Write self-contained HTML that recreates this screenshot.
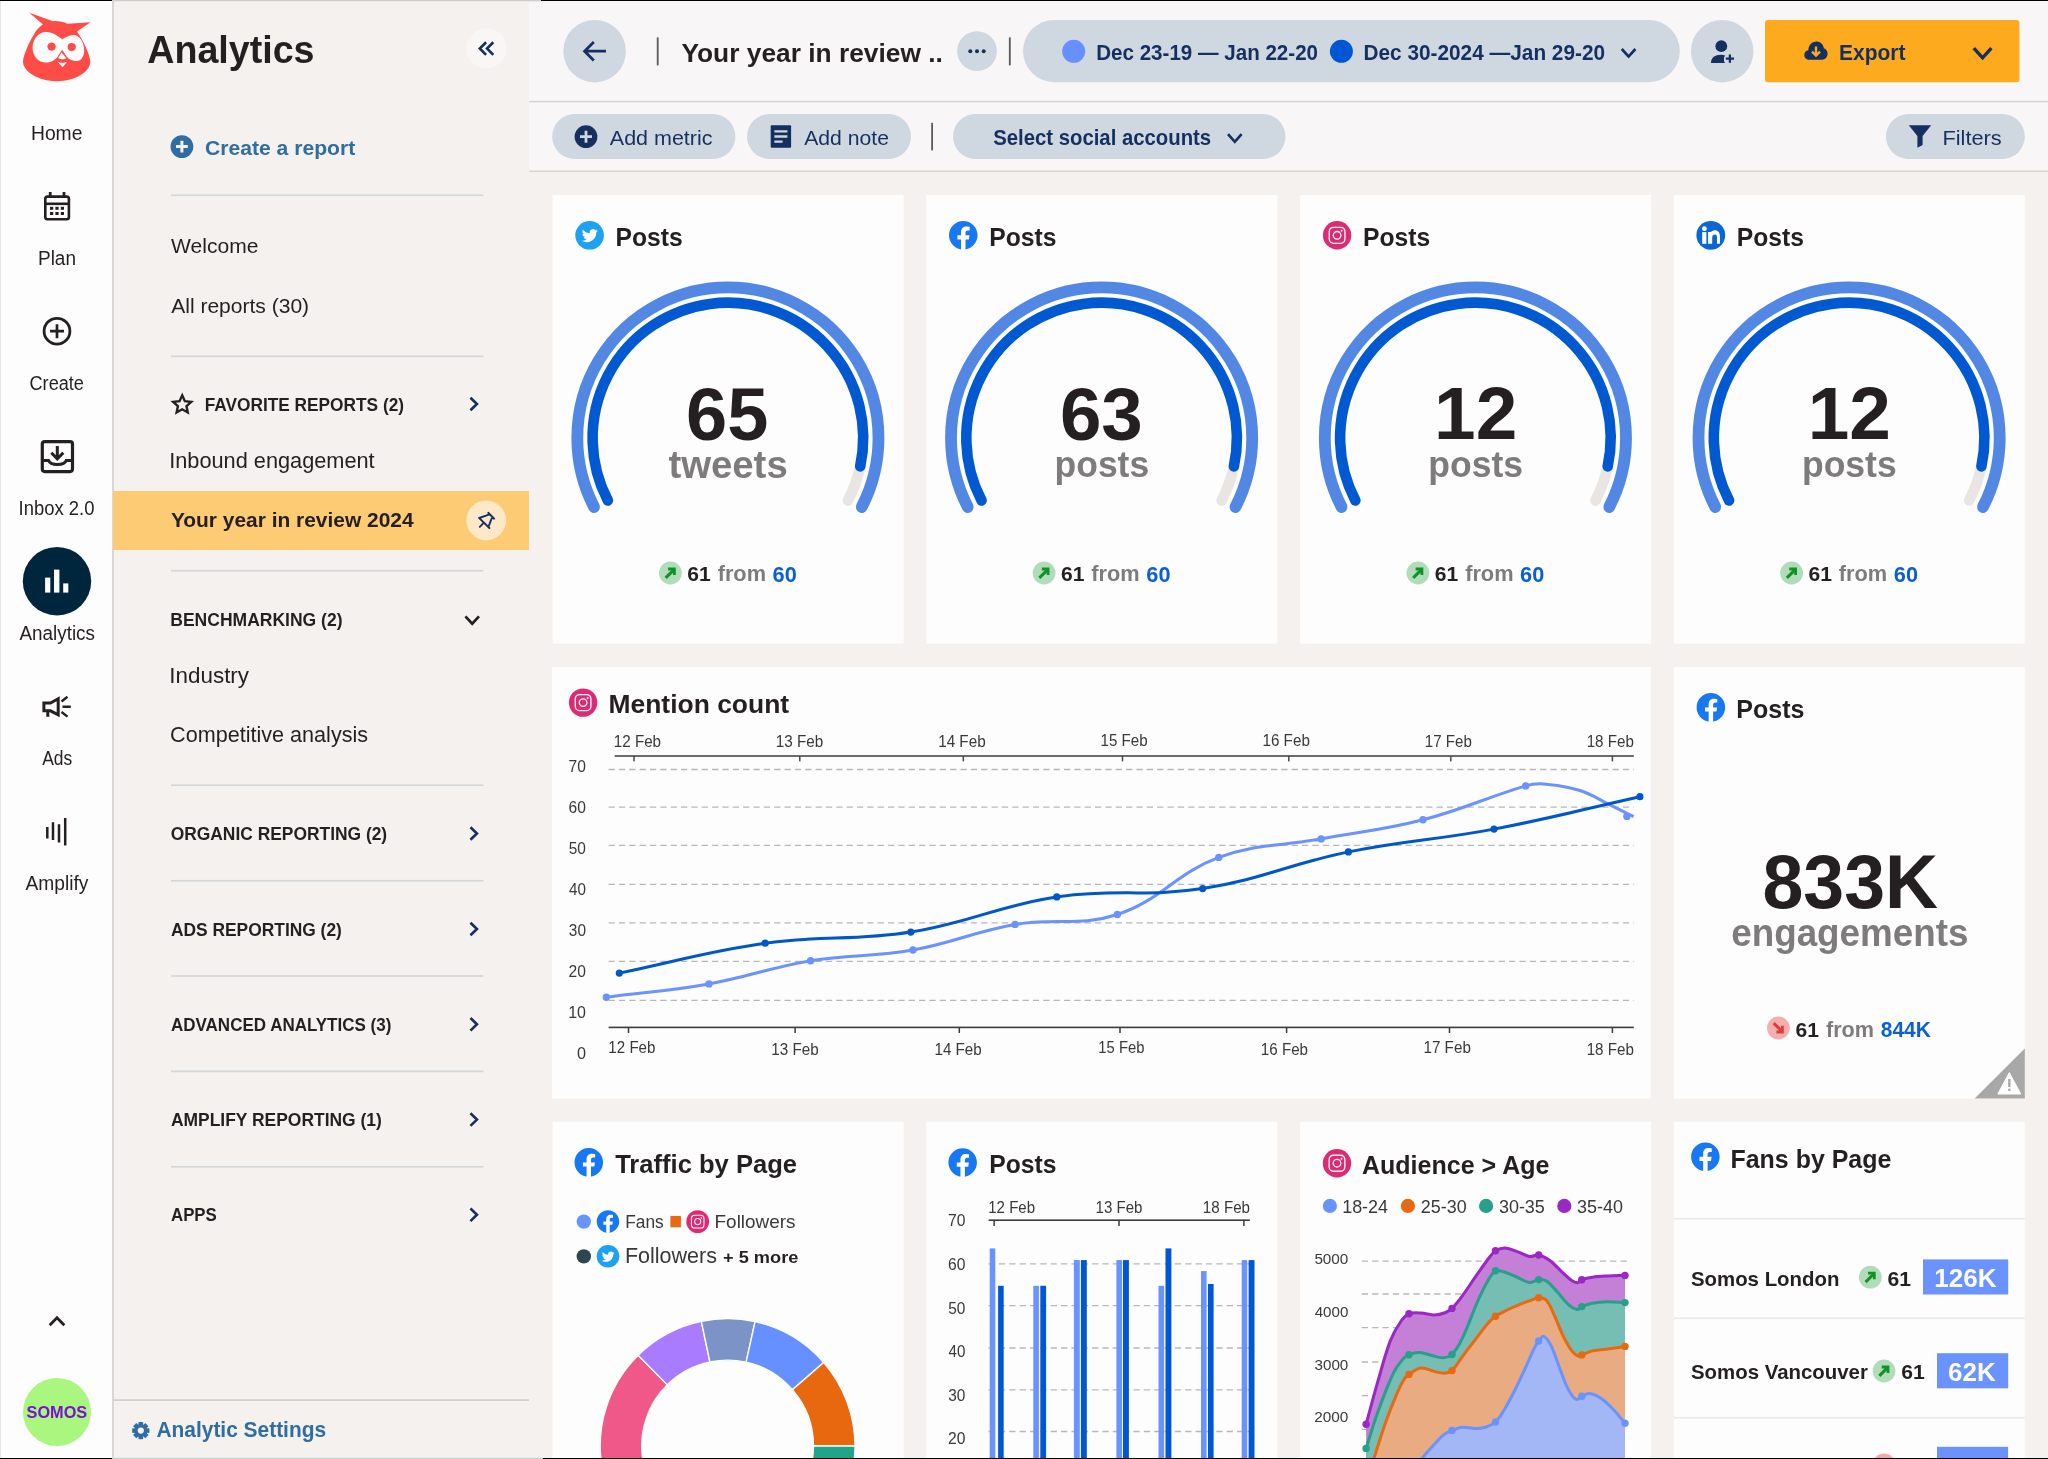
<!DOCTYPE html><html lang="en"><head><meta charset="utf-8"><title>Analytics</title><style>
*{margin:0;padding:0;box-sizing:border-box}
html,body{width:2048px;height:1459px;overflow:hidden;background:#f5f1ee}
body{font-family:"Liberation Sans",sans-serif;position:relative}
.abs{position:absolute;display:block}
svg{overflow:hidden;will-change:transform}
svg text{font-family:"Liberation Sans",sans-serif;white-space:pre}
.card{background:#fdfdfd}
</style></head><body>
<div class="abs nav" style="left:0px;top:0px;width:113px;height:1459px;background:#fdfdfd"></div>
<div class="abs side" style="left:113px;top:0px;width:416px;height:1459px;background:#f5f1ee"></div>
<div class="abs head" style="left:529px;top:0px;width:1519px;height:171px;background:#f8f6f6"></div>
<div class="abs " style="left:0px;top:0px;width:1.4px;height:1459px;background:#e6e4e4"></div>
<div class="abs " style="left:112.2px;top:0px;width:2px;height:1459px;background:#d9d7d7"></div>
<svg class="abs " style="left:0px;top:0px" width="113" height="1459" viewBox="0 0 113 1459"><path fill="#ff4c46" d="M29.3 12.8 L53 21.2 C57 20.6 62.5 21.3 67.5 23.8 L90.6 22.2 L77 31.4 C83 40 89.8 54 90.3 61.5 C90.3 72 75 81.2 57 81.2 C38.5 81.2 23 71.5 23 61.5 C23.3 55 29.5 41 36 31 C38.2 28.2 40.5 26 43 24.6 Z"/><path fill="#fdfdfd" d="M62.3 39.2 C58 36.5 53 32 46.5 32 C38 32 32.6 39.5 32.6 48 C32.6 56.5 38.5 62.6 46 62.6 C51 62.6 55.5 59.5 58 56.5 L62.2 50 L66.5 56.5 C69 59.5 73 61 76.5 61 C81.5 61 84.2 56 84.2 50.5 C84.2 42.5 79.5 35 73.5 35 C69 35 65.5 37.5 62.3 39.2 Z"/><circle cx="51.6" cy="46.6" r="4.2" fill="#ff4c46"/><circle cx="71.7" cy="47" r="4.1" fill="#ff4c46"/><path fill="#ff4c46" d="M62 50 L56.5 58.8 C58.5 60.3 60.3 60.8 62.3 60.8 C64.3 60.8 66 60.3 67.8 59 Z"/><path fill="#fdfdfd" d="M61.6 52.5 L58.2 58.3 C59.6 59 60.8 59.3 62.3 59.3 C63.7 59.3 64.8 59 66.3 58.3 Z"/><path fill="#fdfdfd" d="M57.4 61.6 C59 62.6 60.6 63 62.4 63 C64.2 63 65.8 62.6 67.4 61.6 L62.5 67.3 Z"/><text x="30.96" y="140" font-size="19.33" font-weight="400" fill="#241f21" textLength="51.46" lengthAdjust="spacingAndGlyphs">Home</text><text x="37.98" y="264.8" font-size="19.33" font-weight="400" fill="#241f21" textLength="37.99" lengthAdjust="spacingAndGlyphs">Plan</text><text x="29.49" y="390" font-size="19.33" font-weight="400" fill="#241f21" textLength="54.46" lengthAdjust="spacingAndGlyphs">Create</text><text x="18.54" y="515.2" font-size="19.33" font-weight="400" fill="#241f21" textLength="75.89" lengthAdjust="spacingAndGlyphs">Inbox 2.0</text><text x="19.5" y="640" font-size="19.33" font-weight="400" fill="#241f21" textLength="75.49" lengthAdjust="spacingAndGlyphs">Analytics</text><text x="42.2" y="765.2" font-size="19.33" font-weight="400" fill="#241f21" textLength="29.98" lengthAdjust="spacingAndGlyphs">Ads</text><text x="25.5" y="890" font-size="19.33" font-weight="400" fill="#241f21" textLength="62.97" lengthAdjust="spacingAndGlyphs">Amplify</text><g fill="none" stroke="#241f21" stroke-width="2.6"><rect x="45.3" y="196.6" width="23.6" height="22.6" rx="2.2"/><path d="M45.3 203.8 H68.9"/><path d="M50.2 192 V197 M64 192 V197" stroke-width="2.8"/></g><rect x="50" y="206.8" width="3.2" height="3" fill="#241f21"/><rect x="55.4" y="206.8" width="3.2" height="3" fill="#241f21"/><rect x="60.8" y="206.8" width="3.2" height="3" fill="#241f21"/><rect x="50" y="212" width="3.2" height="3" fill="#241f21"/><rect x="55.4" y="212" width="3.2" height="3" fill="#241f21"/><rect x="60.8" y="212" width="3.2" height="3" fill="#241f21"/><circle cx="57" cy="331.2" r="12.9" fill="none" stroke="#241f21" stroke-width="2.8"/><path d="M50 331.2 H64 M57 324.2 V338.2" stroke="#241f21" stroke-width="2.7" fill="none"/><rect x="42.3" y="441.6" width="30.2" height="30" rx="2.5" fill="none" stroke="#241f21" stroke-width="3.2"/><path d="M42.3 460.5 H48.5 C50.5 465.8 64.3 465.8 66.3 460.5 H72.5" fill="none" stroke="#241f21" stroke-width="3"/><path d="M57.3 446 V458.5 M51.3 452.8 L57.3 458.8 L63.3 452.8" fill="none" stroke="#241f21" stroke-width="3"/><circle cx="57" cy="581.2" r="34.2" fill="#00263e"/><rect x="45.1" y="577.6" width="5.2" height="15" fill="#fdfdfd"/><rect x="54" y="569.6" width="5.4" height="23" fill="#fdfdfd"/><rect x="63.2" y="583.4" width="5.1" height="9.2" fill="#fdfdfd"/><g fill="none" stroke="#241f21" stroke-width="3" stroke-linejoin="miter"><path d="M43.9 703 H50.5 L58.2 698.8 V714.8 L50.5 710.8 H43.9 Z"/><path d="M47.8 711 V716.8" stroke-width="3"/><path d="M62.5 706.8 H70.8 M61.5 701.5 L67.5 696.8 M61.5 712 L67.5 716.6" stroke-width="2.4"/></g><path d="M47.3 827 V838.6 M53 822.2 V840 M59 824.3 V842.5 M65.2 818 V845.6" stroke="#241f21" stroke-width="2.5" fill="none"/><path d="M49.7 1325.3 L57 1317.7 L64.3 1325.3" fill="none" stroke="#241f21" stroke-width="2.8" stroke-linecap="butt" stroke-linejoin="miter"/><circle cx="57" cy="1412" r="34" fill="#a9f77f"/><text x="26.51" y="1417.8" font-size="16.86" font-weight="700" fill="#7a0fd6" textLength="60.7" lengthAdjust="spacingAndGlyphs">SOMOS</text></svg>
<svg class="abs " style="left:113px;top:0px" width="416" height="1459" viewBox="113 0 416 1459"><text x="147.26" y="62.5" font-size="38.66" font-weight="700" fill="#241f21" textLength="167.3" lengthAdjust="spacingAndGlyphs">Analytics</text><circle cx="486.3" cy="48.3" r="20" fill="#f9f7f6"/><path d="M486.1 42.3 L479.8 48.5 L486.1 54.9 M493.3 42.3 L487 48.5 L493.3 54.9" fill="none" stroke="#15305f" stroke-width="2.6"/><circle cx="181.9" cy="146.6" r="11.4" fill="#2f6da3"/><path d="M176 146.6 H187.8 M181.9 140.7 V152.5" stroke="#f5f1ee" stroke-width="3" fill="none"/><text x="204.95" y="154.9" font-size="20.93" font-weight="700" fill="#2f6da3" textLength="150.34" lengthAdjust="spacingAndGlyphs">Create a report</text><rect x="171" y="194.45" width="312.4" height="1.7" fill="#d4d7da"/><text x="171.09" y="253.4" font-size="20.93" font-weight="400" fill="#241f21" textLength="87.34" lengthAdjust="spacingAndGlyphs">Welcome</text><text x="171.2" y="312.5" font-size="21.08" font-weight="400" fill="#241f21" textLength="137.92" lengthAdjust="spacingAndGlyphs">All reports (30)</text><rect x="171" y="355.45" width="312.4" height="1.7" fill="#d4d7da"/><polygon points="182.2,395.3 184.85,401.16 191.24,401.86 186.48,406.19 187.78,412.49 182.2,409.3 176.62,412.49 177.92,406.19 173.16,401.86 179.55,401.16" fill="none" stroke="#241f21" stroke-width="2.4" stroke-linejoin="miter"/><text x="204.68" y="411" font-size="18.75" font-weight="700" fill="#241f21" textLength="199.36" lengthAdjust="spacingAndGlyphs">FAVORITE REPORTS (2)</text><path d="M470.45 397.7 L476.95 404 L470.45 410.3" fill="none" stroke="#15305f" stroke-width="2.6" stroke-linecap="butt" stroke-linejoin="miter"/><text x="169.24" y="468" font-size="21.22" font-weight="400" fill="#241f21" textLength="205.43" lengthAdjust="spacingAndGlyphs">Inbound engagement</text><rect x="113" y="491" width="416" height="59" fill="#fdcb74"/><text x="170.89" y="527" font-size="20.93" font-weight="700" fill="#241f21" textLength="242.7" lengthAdjust="spacingAndGlyphs">Your year in review 2024</text><circle cx="486.2" cy="520.3" r="19.9" fill="#fde9c8"/><path d="M488.2 512.8 L494.2 518.7 M489 514.6 L479.2 518 M479 517.9 L489.4 528 M491.7 518.4 L488.4 527 M483.4 523.2 L479.8 526.8" fill="none" stroke="#15305f" stroke-width="1.9" stroke-linecap="round"/><rect x="171" y="569.85" width="312.4" height="1.7" fill="#d4d7da"/><text x="170.26" y="625.6" font-size="18.6" font-weight="700" fill="#241f21" textLength="172.28" lengthAdjust="spacingAndGlyphs">BENCHMARKING (2)</text><path d="M465.4 616.3 L472.2 623.7 L479 616.3" fill="none" stroke="#241f21" stroke-width="2.7" stroke-linecap="butt" stroke-linejoin="miter"/><text x="169.38" y="682.6" font-size="21.22" font-weight="400" fill="#241f21" textLength="79.66" lengthAdjust="spacingAndGlyphs">Industry</text><text x="170.12" y="742" font-size="21.22" font-weight="400" fill="#241f21" textLength="197.95" lengthAdjust="spacingAndGlyphs">Competitive analysis</text><rect x="171" y="784.35" width="312.4" height="1.7" fill="#d4d7da"/><text x="170.7" y="840.1" font-size="18.6" font-weight="700" fill="#241f21" textLength="216.47" lengthAdjust="spacingAndGlyphs">ORGANIC REPORTING (2)</text><path d="M470.45 827.2 L476.95 833.5 L470.45 839.8" fill="none" stroke="#15305f" stroke-width="2.6" stroke-linecap="butt" stroke-linejoin="miter"/><rect x="171" y="879.95" width="312.4" height="1.7" fill="#d4d7da"/><text x="170.97" y="935.6" font-size="18.6" font-weight="700" fill="#241f21" textLength="170.89" lengthAdjust="spacingAndGlyphs">ADS REPORTING (2)</text><path d="M470.45 922.7 L476.95 929 L470.45 935.3" fill="none" stroke="#15305f" stroke-width="2.6" stroke-linecap="butt" stroke-linejoin="miter"/><rect x="171" y="975.15" width="312.4" height="1.7" fill="#d4d7da"/><text x="170.98" y="1030.9" font-size="18.6" font-weight="700" fill="#241f21" textLength="220.36" lengthAdjust="spacingAndGlyphs">ADVANCED ANALYTICS (3)</text><path d="M470.45 1018 L476.95 1024.3 L470.45 1030.6" fill="none" stroke="#15305f" stroke-width="2.6" stroke-linecap="butt" stroke-linejoin="miter"/><rect x="171" y="1070.55" width="312.4" height="1.7" fill="#d4d7da"/><text x="170.96" y="1126.2" font-size="18.6" font-weight="700" fill="#241f21" textLength="210.88" lengthAdjust="spacingAndGlyphs">AMPLIFY REPORTING (1)</text><path d="M470.45 1113.3 L476.95 1119.6 L470.45 1125.9" fill="none" stroke="#15305f" stroke-width="2.6" stroke-linecap="butt" stroke-linejoin="miter"/><rect x="171" y="1165.95" width="312.4" height="1.7" fill="#d4d7da"/><text x="170.98" y="1221.4" font-size="18.6" font-weight="700" fill="#241f21" textLength="45.87" lengthAdjust="spacingAndGlyphs">APPS</text><path d="M470.45 1208.5 L476.95 1214.8 L470.45 1221.1" fill="none" stroke="#15305f" stroke-width="2.6" stroke-linecap="butt" stroke-linejoin="miter"/><rect x="113" y="1399.2" width="416" height="1.8" fill="#d4d2d1"/><g transform="translate(140.8 1430.6)" fill="#2f6da3"><rect x="-2.3" y="-8.6" width="4.6" height="5" transform="rotate(0)"/><rect x="-2.3" y="-8.6" width="4.6" height="5" transform="rotate(45)"/><rect x="-2.3" y="-8.6" width="4.6" height="5" transform="rotate(90)"/><rect x="-2.3" y="-8.6" width="4.6" height="5" transform="rotate(135)"/><rect x="-2.3" y="-8.6" width="4.6" height="5" transform="rotate(180)"/><rect x="-2.3" y="-8.6" width="4.6" height="5" transform="rotate(225)"/><rect x="-2.3" y="-8.6" width="4.6" height="5" transform="rotate(270)"/><rect x="-2.3" y="-8.6" width="4.6" height="5" transform="rotate(315)"/><circle r="6.3"/></g><circle cx="140.8" cy="1430.6" r="3.1" fill="#f5f1ee"/><text x="156.48" y="1437.4" font-size="21.22" font-weight="700" fill="#2f6da3" textLength="169.62" lengthAdjust="spacingAndGlyphs">Analytic Settings</text></svg>
<svg class="abs " style="left:529px;top:0px" width="1519" height="172" viewBox="529 0 1519 172"><circle cx="594.6" cy="51.2" r="31.3" fill="#cfd7e0"/><path d="M606 51.2 H585 M593.8 42 L584.6 51.2 L593.8 60.4" fill="none" stroke="#15305f" stroke-width="2.8"/><rect x="656.8" y="37.4" width="1.8" height="28" fill="#5a5a5a"/><text x="681.41" y="61.5" font-size="25.58" font-weight="700" fill="#241f21" textLength="261.44" lengthAdjust="spacingAndGlyphs">Your year in review ..</text><circle cx="977" cy="51.1" r="19.9" fill="#cfd7e0"/><circle cx="970.3" cy="51.2" r="2" fill="#15305f"/><circle cx="977" cy="51.2" r="2" fill="#15305f"/><circle cx="983.7" cy="51.2" r="2" fill="#15305f"/><rect x="1008.9" y="37.4" width="1.8" height="28" fill="#5a5a5a"/><rect x="1023" y="20" width="656.8" height="62.2" rx="31.1" fill="#cfd7e0"/><circle cx="1073.7" cy="51.3" r="11.5" fill="#6690ff"/><text x="1096.26" y="59.8" font-size="21.95" font-weight="700" fill="#15305f" textLength="221.75" lengthAdjust="spacingAndGlyphs">Dec 23-19 — Jan 22-20</text><circle cx="1341.4" cy="51.3" r="11.5" fill="#0057d4"/><text x="1363.55" y="59.8" font-size="21.95" font-weight="700" fill="#15305f" textLength="241.46" lengthAdjust="spacingAndGlyphs">Dec 30-2024 —Jan 29-20</text><path d="M1621.8 49 L1628.6 56.6 L1635.4 49" fill="none" stroke="#15305f" stroke-width="2.7" stroke-linecap="butt" stroke-linejoin="miter"/><circle cx="1722.2" cy="51.2" r="31.3" fill="#cfd7e0"/><circle cx="1721.3" cy="46.2" r="5.9" fill="#15305f"/><path d="M1711 63 C1711 57.6 1715 54.8 1721 54.8 C1722.6 54.8 1724 55 1725.2 55.4 C1723.6 57 1723.4 60.6 1725 63 Z" fill="#15305f"/><path d="M1725.8 58.7 H1734 M1729.9 54.6 V62.8" stroke="#15305f" stroke-width="2.3" fill="none"/><rect x="1765" y="20" width="254.4" height="62.3" rx="3" fill="#fdaa1e"/><path fill="#15305f" d="M1809.6 59.8 C1806.4 59.8 1804.3 57.6 1804.3 54.9 C1804.3 52.5 1806 50.6 1808.3 50.2 C1808.6 45.4 1811.8 41.6 1816.3 41.6 C1820.2 41.6 1823.2 44.3 1823.9 48.2 C1826.1 48.8 1827.6 50.9 1827.6 53.6 C1827.6 57 1825.2 59.8 1822 59.8 Z"/><path d="M1816 46.5 V55 M1812 51.6 L1816 55.6 L1820 51.6" fill="none" stroke="#fdaa1e" stroke-width="2.4"/><text x="1839.04" y="59.8" font-size="21.51" font-weight="700" fill="#15305f" textLength="66.42" lengthAdjust="spacingAndGlyphs">Export</text><path d="M1973.8 48.2 L1982.6 57.8 L1991.4 48.2" fill="none" stroke="#15305f" stroke-width="3.4" stroke-linecap="butt" stroke-linejoin="miter"/><rect x="529" y="100.8" width="1519" height="1.5" fill="#d4d2d2"/><rect x="529" y="170.6" width="1519" height="1.5" fill="#d4d2d2"/><rect x="552.2" y="114" width="183.2" height="45" rx="22.5" fill="#cfd7e0"/><circle cx="586" cy="136.7" r="11.4" fill="#15305f"/><path d="M580 136.7 H592 M586 130.7 V142.7" stroke="#cfd7e0" stroke-width="2.8" fill="none"/><text x="609.8" y="144.5" font-size="20.64" font-weight="400" fill="#15305f" textLength="102.73" lengthAdjust="spacingAndGlyphs">Add metric</text><rect x="747" y="114" width="164" height="45" rx="22.5" fill="#cfd7e0"/><rect x="770.7" y="125.2" width="20.4" height="22.6" rx="1" fill="#15305f"/><path d="M774.4 131.4 H787.4 M774.4 136.5 H787.4 M774.4 141.6 H782.6" stroke="#cfd7e0" stroke-width="2.4" fill="none"/><text x="804.2" y="144.5" font-size="20.64" font-weight="400" fill="#15305f" textLength="84.72" lengthAdjust="spacingAndGlyphs">Add note</text><rect x="931.2" y="122.8" width="1.8" height="27.6" fill="#5a5a5a"/><rect x="953" y="114" width="332.5" height="45" rx="22.5" fill="#cfd7e0"/><text x="993.19" y="144.8" font-size="21.66" font-weight="700" fill="#15305f" textLength="217.97" lengthAdjust="spacingAndGlyphs">Select social accounts</text><path d="M1228 134.2 L1234.8 141.8 L1241.6 134.2" fill="none" stroke="#15305f" stroke-width="2.7" stroke-linecap="butt" stroke-linejoin="miter"/><rect x="1886" y="114" width="138.8" height="45" rx="22.5" fill="#cfd7e0"/><path fill="#15305f" d="M1908.8 125.2 H1931.2 L1922.6 136 V145 L1917.4 147.8 V136 Z"/><text x="1942.46" y="144.5" font-size="20.64" font-weight="400" fill="#15305f" textLength="59.25" lengthAdjust="spacingAndGlyphs">Filters</text></svg>
<svg class="abs " style="left:529px;top:172px" width="1519" height="1287" viewBox="529 172 1519 1287"><rect x="552.6" y="195" width="351" height="448.7" fill="#fdfdfd"/><rect x="552.6" y="1121.8" width="351" height="338.2" fill="#fdfdfd"/><rect x="926.3" y="195" width="351" height="448.7" fill="#fdfdfd"/><rect x="926.3" y="1121.8" width="351" height="338.2" fill="#fdfdfd"/><rect x="1300.1" y="195" width="351" height="448.7" fill="#fdfdfd"/><rect x="1300.1" y="1121.8" width="351" height="338.2" fill="#fdfdfd"/><rect x="1673.8" y="195" width="351" height="448.7" fill="#fdfdfd"/><rect x="1673.8" y="1121.8" width="351" height="338.2" fill="#fdfdfd"/><rect x="551.9" y="667" width="1098.9" height="431.7" fill="#fdfdfd"/><rect x="1673.8" y="667" width="351" height="431.7" fill="#fdfdfd"/></svg><svg class="abs " style="left:552px;top:195px" width="352" height="449" viewBox="552 195 352 449"><circle cx="589.6" cy="235.3" r="14.3" fill="#1da1f2"/><path transform="translate(581.79 227.59) scale(0.67)" d="M23.953 4.57a10 10 0 01-2.825.775 4.958 4.958 0 002.163-2.723c-.951.555-2.005.959-3.127 1.184a4.92 4.92 0 00-8.384 4.482C7.69 8.095 4.067 6.13 1.64 3.162a4.822 4.822 0 00-.666 2.475c0 1.71.87 3.213 2.188 4.096a4.904 4.904 0 01-2.228-.616v.06a4.923 4.923 0 003.946 4.827 4.996 4.996 0 01-2.212.085 4.936 4.936 0 004.604 3.417 9.867 9.867 0 01-6.102 2.105c-.39 0-.779-.023-1.17-.067a13.995 13.995 0 007.557 2.209c9.053 0 13.998-7.496 13.998-13.985 0-.21 0-.42-.015-.63A9.935 9.935 0 0024 4.59z" fill="#fdfdfd"/><text x="615.6" y="245.9" font-size="26.6" font-weight="700" fill="#241f21" textLength="67.17" lengthAdjust="spacingAndGlyphs">Posts</text><path d="M594.07 507.07 A150.6 150.6 0 1 1 861.73 507.07" fill="none" stroke="#5288e4" stroke-width="11.8" stroke-linecap="round"/><path d="M860.19 466.36 A135.3 135.3 0 0 1 847.91 500.47" fill="none" stroke="#e8e5e3" stroke-width="10.6" stroke-linecap="round"/><path d="M607.89 500.47 A135.3 135.3 0 1 1 860.19 466.36" fill="none" stroke="#0059d0" stroke-width="10.6" stroke-linecap="round"/><text x="686.11" y="439.56" font-size="74.23" font-weight="700" fill="#241f21" textLength="82.31" lengthAdjust="spacingAndGlyphs">65</text><text x="668.42" y="477.92" font-size="38.35" font-weight="700" fill="#7e7b7c" textLength="119.31" lengthAdjust="spacingAndGlyphs">tweets</text><circle cx="670.4" cy="573" r="11.4" fill="#b1dcba"/><path d="M665.7 577.9 L674 569.6" fill="none" stroke="#0f9226" stroke-width="3"/><path d="M668.1 567.6 H675.8 V575 H673 V570.4 H668.1 Z" fill="#0f9226"/><text x="687.36" y="581.49" font-size="20.99" font-weight="700" fill="#241f21" textLength="23.41" lengthAdjust="spacingAndGlyphs">61</text><text x="717.67" y="581.48" font-size="22.45" font-weight="700" fill="#7e7b7c" textLength="48.37" lengthAdjust="spacingAndGlyphs">from</text><text x="772.64" y="581.68" font-size="21.55" font-weight="700" fill="#0a5fd6" textLength="24.18" lengthAdjust="spacingAndGlyphs">60</text></svg><svg class="abs " style="left:926px;top:195px" width="352" height="449" viewBox="926 195 352 449"><circle cx="963.3" cy="235.3" r="13.8" fill="#fdfdfd"/><path transform="translate(949 220.92) scale(1.19)" d="M24 12.073c0-6.627-5.373-12-12-12s-12 5.373-12 12c0 5.99 4.388 10.954 10.125 11.854v-8.385H7.078v-3.47h3.047V9.43c0-3.007 1.792-4.669 4.533-4.669 1.312 0 2.686.235 2.686.235v2.953H15.83c-1.491 0-1.956.925-1.956 1.874v2.25h3.328l-.532 3.47h-2.796v8.385C19.612 23.027 24 18.062 24 12.073z" fill="#1877f2"/><text x="989.3" y="245.9" font-size="26.6" font-weight="700" fill="#241f21" textLength="67.17" lengthAdjust="spacingAndGlyphs">Posts</text><path d="M967.77 507.07 A150.6 150.6 0 1 1 1235.43 507.07" fill="none" stroke="#5288e4" stroke-width="11.8" stroke-linecap="round"/><path d="M1233.89 466.36 A135.3 135.3 0 0 1 1221.61 500.47" fill="none" stroke="#e8e5e3" stroke-width="10.6" stroke-linecap="round"/><path d="M981.59 500.47 A135.3 135.3 0 1 1 1233.89 466.36" fill="none" stroke="#0059d0" stroke-width="10.6" stroke-linecap="round"/><text x="1059.89" y="439.75" font-size="74.51" font-weight="700" fill="#241f21" textLength="82.89" lengthAdjust="spacingAndGlyphs">63</text><text x="1054.6" y="477.33" font-size="37.46" font-weight="700" fill="#7e7b7c" textLength="94.49" lengthAdjust="spacingAndGlyphs">posts</text><circle cx="1044.1" cy="573" r="11.4" fill="#b1dcba"/><path d="M1039.4 577.9 L1047.7 569.6" fill="none" stroke="#0f9226" stroke-width="3"/><path d="M1041.8 567.6 H1049.5 V575 H1046.7 V570.4 H1041.8 Z" fill="#0f9226"/><text x="1061.06" y="581.49" font-size="20.99" font-weight="700" fill="#241f21" textLength="23.41" lengthAdjust="spacingAndGlyphs">61</text><text x="1091.37" y="581.48" font-size="22.45" font-weight="700" fill="#7e7b7c" textLength="48.37" lengthAdjust="spacingAndGlyphs">from</text><text x="1146.34" y="581.68" font-size="21.55" font-weight="700" fill="#0a5fd6" textLength="24.18" lengthAdjust="spacingAndGlyphs">60</text></svg><svg class="abs " style="left:1300px;top:195px" width="352" height="449" viewBox="1300 195 352 449"><circle cx="1337.1" cy="235.3" r="14.2" fill="#dd2a73"/><rect x="1329.3" y="227.3" width="15.6" height="16" rx="4.2" fill="none" stroke="#fdfdfd" stroke-width="1.35"/><circle cx="1337.1" cy="235.3" r="3.8" fill="none" stroke="#fdfdfd" stroke-width="1.3"/><circle cx="1341.6" cy="230.8" r="1" fill="#fdfdfd"/><text x="1363.1" y="245.9" font-size="26.6" font-weight="700" fill="#241f21" textLength="67.17" lengthAdjust="spacingAndGlyphs">Posts</text><path d="M1341.57 507.07 A150.6 150.6 0 1 1 1609.23 507.07" fill="none" stroke="#5288e4" stroke-width="11.8" stroke-linecap="round"/><path d="M1607.69 466.36 A135.3 135.3 0 0 1 1595.41 500.47" fill="none" stroke="#e8e5e3" stroke-width="10.6" stroke-linecap="round"/><path d="M1355.39 500.47 A135.3 135.3 0 1 1 1607.69 466.36" fill="none" stroke="#0059d0" stroke-width="10.6" stroke-linecap="round"/><text x="1434.11" y="439.1" font-size="73.57" font-weight="700" fill="#241f21" textLength="83.15" lengthAdjust="spacingAndGlyphs">12</text><text x="1428.29" y="477.33" font-size="37.46" font-weight="700" fill="#7e7b7c" textLength="94.7" lengthAdjust="spacingAndGlyphs">posts</text><circle cx="1417.9" cy="573" r="11.4" fill="#b1dcba"/><path d="M1413.2 577.9 L1421.5 569.6" fill="none" stroke="#0f9226" stroke-width="3"/><path d="M1415.6 567.6 H1423.3 V575 H1420.5 V570.4 H1415.6 Z" fill="#0f9226"/><text x="1434.86" y="581.49" font-size="20.99" font-weight="700" fill="#241f21" textLength="23.41" lengthAdjust="spacingAndGlyphs">61</text><text x="1465.17" y="581.48" font-size="22.45" font-weight="700" fill="#7e7b7c" textLength="48.37" lengthAdjust="spacingAndGlyphs">from</text><text x="1520.14" y="581.68" font-size="21.55" font-weight="700" fill="#0a5fd6" textLength="24.18" lengthAdjust="spacingAndGlyphs">60</text></svg><svg class="abs " style="left:1673px;top:195px" width="352" height="449" viewBox="1673 195 352 449"><circle cx="1710.8" cy="235.3" r="14.4" fill="#0a66d0"/><circle cx="1704.4" cy="228.7" r="2.4" fill="#fdfdfd"/><rect x="1702.2" y="232.1" width="4.2" height="11.7" fill="#fdfdfd"/><path d="M1708.1 232.1 V243.8 H1712.2 V237.9 c0 -2.2 1 -3.4 2.6 -3.4 c1.6 0 2.2 1.2 2.2 3.2 V243.8 H1720 V236.9 c0 -4.4 -1.9 -6.6 -5.3 -6.6 c-2 0 -3.3 1 -3.8 2 V232.1 Z" fill="#fdfdfd"/><text x="1736.8" y="245.9" font-size="26.6" font-weight="700" fill="#241f21" textLength="67.17" lengthAdjust="spacingAndGlyphs">Posts</text><path d="M1715.27 507.07 A150.6 150.6 0 1 1 1982.93 507.07" fill="none" stroke="#5288e4" stroke-width="11.8" stroke-linecap="round"/><path d="M1981.39 466.36 A135.3 135.3 0 0 1 1969.11 500.47" fill="none" stroke="#e8e5e3" stroke-width="10.6" stroke-linecap="round"/><path d="M1729.09 500.47 A135.3 135.3 0 1 1 1981.39 466.36" fill="none" stroke="#0059d0" stroke-width="10.6" stroke-linecap="round"/><text x="1807.81" y="439.1" font-size="73.57" font-weight="700" fill="#241f21" textLength="83.15" lengthAdjust="spacingAndGlyphs">12</text><text x="1801.99" y="477.33" font-size="37.46" font-weight="700" fill="#7e7b7c" textLength="94.7" lengthAdjust="spacingAndGlyphs">posts</text><circle cx="1791.6" cy="573" r="11.4" fill="#b1dcba"/><path d="M1786.9 577.9 L1795.2 569.6" fill="none" stroke="#0f9226" stroke-width="3"/><path d="M1789.3 567.6 H1797 V575 H1794.2 V570.4 H1789.3 Z" fill="#0f9226"/><text x="1808.56" y="581.49" font-size="20.99" font-weight="700" fill="#241f21" textLength="23.41" lengthAdjust="spacingAndGlyphs">61</text><text x="1838.87" y="581.48" font-size="22.45" font-weight="700" fill="#7e7b7c" textLength="48.37" lengthAdjust="spacingAndGlyphs">from</text><text x="1893.84" y="581.68" font-size="21.55" font-weight="700" fill="#0a5fd6" textLength="24.18" lengthAdjust="spacingAndGlyphs">60</text></svg><svg class="abs " style="left:552px;top:666px" width="1099" height="433" viewBox="552 666 1099 433"><circle cx="583.1" cy="702.6" r="14.2" fill="#dd2a73"/><rect x="575.3" y="694.6" width="15.6" height="16" rx="4.2" fill="none" stroke="#fdfdfd" stroke-width="1.35"/><circle cx="583.1" cy="702.6" r="3.8" fill="none" stroke="#fdfdfd" stroke-width="1.3"/><circle cx="587.6" cy="698.1" r="1" fill="#fdfdfd"/><text x="608.48" y="713" font-size="26.45" font-weight="700" fill="#241f21" textLength="180.64" lengthAdjust="spacingAndGlyphs">Mention count</text><rect x="614.6" y="755.2" width="1019.2" height="1.6" fill="#4a4848"/><rect x="633.25" y="756" width="1.5" height="5.4" fill="#4a4848"/><rect x="799.05" y="756" width="1.5" height="5.4" fill="#4a4848"/><rect x="962.55" y="756" width="1.5" height="5.4" fill="#4a4848"/><rect x="1121.75" y="756" width="1.5" height="5.4" fill="#4a4848"/><rect x="1288.05" y="756" width="1.5" height="5.4" fill="#4a4848"/><rect x="1450.05" y="756" width="1.5" height="5.4" fill="#4a4848"/><rect x="1611.65" y="756" width="1.5" height="5.4" fill="#4a4848"/><text x="613.86" y="747" font-size="15.84" font-weight="400" fill="#3a3839" textLength="47.19" lengthAdjust="spacingAndGlyphs">12 Feb</text><text x="775.86" y="747" font-size="15.84" font-weight="400" fill="#3a3839" textLength="47.4" lengthAdjust="spacingAndGlyphs">13 Feb</text><text x="938.16" y="747" font-size="15.84" font-weight="400" fill="#3a3839" textLength="47.51" lengthAdjust="spacingAndGlyphs">14 Feb</text><text x="1100.46" y="745.8" font-size="15.84" font-weight="400" fill="#3a3839" textLength="47.19" lengthAdjust="spacingAndGlyphs">15 Feb</text><text x="1262.46" y="745.8" font-size="15.84" font-weight="400" fill="#3a3839" textLength="47.4" lengthAdjust="spacingAndGlyphs">16 Feb</text><text x="1424.87" y="747" font-size="15.84" font-weight="400" fill="#3a3839" textLength="46.99" lengthAdjust="spacingAndGlyphs">17 Feb</text><text x="1586.66" y="747" font-size="15.84" font-weight="400" fill="#3a3839" textLength="47.19" lengthAdjust="spacingAndGlyphs">18 Feb</text><text x="568.62" y="772.45" font-size="15.84" font-weight="400" fill="#3a3839" textLength="17.36" lengthAdjust="spacingAndGlyphs">70</text><text x="568.62" y="813.45" font-size="15.84" font-weight="400" fill="#3a3839" textLength="17.36" lengthAdjust="spacingAndGlyphs">60</text><text x="568.78" y="854.25" font-size="15.84" font-weight="400" fill="#3a3839" textLength="17.2" lengthAdjust="spacingAndGlyphs">50</text><text x="569.1" y="895.25" font-size="15.84" font-weight="400" fill="#3a3839" textLength="16.87" lengthAdjust="spacingAndGlyphs">40</text><text x="568.86" y="936.05" font-size="15.84" font-weight="400" fill="#3a3839" textLength="17.11" lengthAdjust="spacingAndGlyphs">30</text><text x="568.62" y="977.05" font-size="15.84" font-weight="400" fill="#3a3839" textLength="17.36" lengthAdjust="spacingAndGlyphs">20</text><text x="568.2" y="1017.75" font-size="15.84" font-weight="400" fill="#3a3839" textLength="17.8" lengthAdjust="spacingAndGlyphs">10</text><text x="576.95" y="1058.75" font-size="15.84" font-weight="400" fill="#3a3839" textLength="9.04" lengthAdjust="spacingAndGlyphs">0</text><path d="M608.6 769.5 H1633.8" stroke="#b9b7b7" stroke-width="1.3" stroke-dasharray="6.2 4.15" fill="none"/><path d="M608.6 807.2 H1633.8" stroke="#b9b7b7" stroke-width="1.3" stroke-dasharray="6.2 4.15" fill="none"/><path d="M608.6 845.4 H1633.8" stroke="#b9b7b7" stroke-width="1.3" stroke-dasharray="6.2 4.15" fill="none"/><path d="M608.6 884.3 H1633.8" stroke="#b9b7b7" stroke-width="1.3" stroke-dasharray="6.2 4.15" fill="none"/><path d="M608.6 922.9 H1633.8" stroke="#b9b7b7" stroke-width="1.3" stroke-dasharray="6.2 4.15" fill="none"/><path d="M608.6 961.4 H1633.8" stroke="#b9b7b7" stroke-width="1.3" stroke-dasharray="6.2 4.15" fill="none"/><path d="M608.6 1000.3 H1633.8" stroke="#b9b7b7" stroke-width="1.3" stroke-dasharray="6.2 4.15" fill="none"/><rect x="608.6" y="1026.6" width="1025.2" height="1.6" fill="#3c3a3a"/><rect x="627.75" y="1027.4" width="1.5" height="5.6" fill="#3c3a3a"/><rect x="794.35" y="1027.4" width="1.5" height="5.6" fill="#3c3a3a"/><rect x="958.55" y="1027.4" width="1.5" height="5.6" fill="#3c3a3a"/><rect x="1119.25" y="1027.4" width="1.5" height="5.6" fill="#3c3a3a"/><rect x="1285.85" y="1027.4" width="1.5" height="5.6" fill="#3c3a3a"/><rect x="1448.75" y="1027.4" width="1.5" height="5.6" fill="#3c3a3a"/><rect x="1611.65" y="1027.4" width="1.5" height="5.6" fill="#3c3a3a"/><text x="608.37" y="1053.4" font-size="15.84" font-weight="400" fill="#3a3839" textLength="47.09" lengthAdjust="spacingAndGlyphs">12 Feb</text><text x="771.26" y="1055" font-size="15.84" font-weight="400" fill="#3a3839" textLength="47.4" lengthAdjust="spacingAndGlyphs">13 Feb</text><text x="934.46" y="1055" font-size="15.84" font-weight="400" fill="#3a3839" textLength="47.19" lengthAdjust="spacingAndGlyphs">14 Feb</text><text x="1098.29" y="1053.4" font-size="15.84" font-weight="400" fill="#3a3839" textLength="46.15" lengthAdjust="spacingAndGlyphs">15 Feb</text><text x="1260.86" y="1055" font-size="15.84" font-weight="400" fill="#3a3839" textLength="47.19" lengthAdjust="spacingAndGlyphs">16 Feb</text><text x="1423.46" y="1053.4" font-size="15.84" font-weight="400" fill="#3a3839" textLength="47.4" lengthAdjust="spacingAndGlyphs">17 Feb</text><text x="1586.66" y="1055" font-size="15.84" font-weight="400" fill="#3a3839" textLength="47.19" lengthAdjust="spacingAndGlyphs">18 Feb</text><path d="M606.3 997.2 C647.34 991.88 668.2 991.15 708.9 983.9 C749.92 976.59 769.52 967.62 810.6 960.8 C851.16 954.06 872.55 957.2 913 950 C954.35 942.64 973.73 931.58 1015.1 924.4 C1055.49 917.38 1079.19 927.07 1117.4 914.5 C1160.67 900.27 1175.76 873.36 1218.8 857.4 C1257.28 843.12 1280.27 846.44 1321.2 838.9 C1361.95 831.4 1382.98 830.17 1423 819.8 C1464.78 808.97 1484.35 798.19 1525.7 785.9 C1532.55 783.87 1536.43 783.4 1543.5 784 C1558.15 785.24 1565.98 786.1 1580 790.5 C1592.38 794.38 1597.73 798.97 1609.5 804.7 C1619.17 809.41 1623.96 811.84 1633.6 816.6" fill="none" stroke="#6b93ff" stroke-width="3" stroke-linejoin="round"/><circle cx="606.3" cy="997.2" r="3.7" fill="#6b93ff"/><circle cx="708.9" cy="983.9" r="3.7" fill="#6b93ff"/><circle cx="810.6" cy="960.8" r="3.7" fill="#6b93ff"/><circle cx="913" cy="950" r="3.7" fill="#6b93ff"/><circle cx="1015.1" cy="924.4" r="3.7" fill="#6b93ff"/><circle cx="1117.4" cy="914.5" r="3.7" fill="#6b93ff"/><circle cx="1218.8" cy="857.4" r="3.7" fill="#6b93ff"/><circle cx="1321.2" cy="838.9" r="3.7" fill="#6b93ff"/><circle cx="1423" cy="819.8" r="3.7" fill="#6b93ff"/><circle cx="1525.7" cy="785.9" r="3.7" fill="#6b93ff"/><circle cx="1626.9" cy="816.4" r="3.7" fill="#6b93ff"/><path d="M619.3 973.1 C677.66 961.14 706.32 951.48 765.2 943.2 C822.92 935.08 853.3 941.23 910.8 932.1 C969.94 922.71 997.62 905.72 1056.8 896.9 C1114.38 888.32 1145.19 897.48 1202.7 888.6 C1261.83 879.48 1289.58 863.92 1348.4 851.9 C1406.1 840.12 1436.11 840.06 1494 829.1 C1552.71 817.98 1581.54 809.66 1639.9 796.7" fill="none" stroke="#0057c8" stroke-width="3" stroke-linejoin="round"/><circle cx="619.3" cy="973.1" r="3.6" fill="#0057c8"/><circle cx="765.2" cy="943.2" r="3.6" fill="#0057c8"/><circle cx="910.8" cy="932.1" r="3.6" fill="#0057c8"/><circle cx="1056.8" cy="896.9" r="3.6" fill="#0057c8"/><circle cx="1202.7" cy="888.6" r="3.6" fill="#0057c8"/><circle cx="1348.4" cy="851.9" r="3.6" fill="#0057c8"/><circle cx="1494" cy="829.1" r="3.6" fill="#0057c8"/><circle cx="1639.9" cy="796.7" r="3.6" fill="#0057c8"/></svg><svg class="abs " style="left:1673px;top:666px" width="352" height="433" viewBox="1673 666 352 433"><circle cx="1710.9" cy="707.4" r="13.8" fill="#fdfdfd"/><path transform="translate(1696.6 693.02) scale(1.19)" d="M24 12.073c0-6.627-5.373-12-12-12s-12 5.373-12 12c0 5.99 4.388 10.954 10.125 11.854v-8.385H7.078v-3.47h3.047V9.43c0-3.007 1.792-4.669 4.533-4.669 1.312 0 2.686.235 2.686.235v2.953H15.83c-1.491 0-1.956.925-1.956 1.874v2.25h3.328l-.532 3.47h-2.796v8.385C19.612 23.027 24 18.062 24 12.073z" fill="#1877f2"/><text x="1736.37" y="717.8" font-size="26.6" font-weight="700" fill="#241f21" textLength="68.11" lengthAdjust="spacingAndGlyphs">Posts</text><text x="1762.5" y="907.55" font-size="75.07" font-weight="700" fill="#241f21" textLength="175.59" lengthAdjust="spacingAndGlyphs">833K</text><text x="1731.23" y="945.82" font-size="38.5" font-weight="700" fill="#7e7b7c" textLength="237.2" lengthAdjust="spacingAndGlyphs">engagements</text><circle cx="1778.4" cy="1028" r="11.4" fill="#f5aeae"/><path d="M1773.7 1023.1 L1782 1031.4" fill="none" stroke="#e23b3b" stroke-width="3"/><path d="M1783.8 1025.7 V1033.4 H1776.4 V1030.6 H1781 V1025.7 Z" fill="#e23b3b"/><text x="1795.56" y="1036.89" font-size="20.99" font-weight="700" fill="#241f21" textLength="23.41" lengthAdjust="spacingAndGlyphs">61</text><text x="1825.98" y="1036.88" font-size="22.45" font-weight="700" fill="#7e7b7c" textLength="48.06" lengthAdjust="spacingAndGlyphs">from</text><text x="1880.77" y="1036.89" font-size="21.27" font-weight="700" fill="#0a5fd6" textLength="50.05" lengthAdjust="spacingAndGlyphs">844K</text><path d="M1974.6 1098.4 L2024.8 1048.6 L2024.8 1098.4 Z" fill="#a9a8a8"/><path d="M2009.3 1072.6 L2020.8 1094 H1997.8 Z" fill="#fdfdfd" stroke="#fdfdfd" stroke-width="1" stroke-linejoin="round"/><rect x="2008.2" y="1079" width="2.3" height="8" fill="#a9a8a8"/><rect x="2008.2" y="1088.6" width="2.3" height="2.4" fill="#a9a8a8"/></svg><svg class="abs " style="left:552px;top:1122px" width="352" height="337" viewBox="552 1122 352 337"><circle cx="588.8" cy="1162.4" r="13.8" fill="#fdfdfd"/><path transform="translate(574.5 1148.02) scale(1.19)" d="M24 12.073c0-6.627-5.373-12-12-12s-12 5.373-12 12c0 5.99 4.388 10.954 10.125 11.854v-8.385H7.078v-3.47h3.047V9.43c0-3.007 1.792-4.669 4.533-4.669 1.312 0 2.686.235 2.686.235v2.953H15.83c-1.491 0-1.956.925-1.956 1.874v2.25h3.328l-.532 3.47h-2.796v8.385C19.612 23.027 24 18.062 24 12.073z" fill="#1877f2"/><text x="615.14" y="1173" font-size="26.16" font-weight="700" fill="#241f21" textLength="181.9" lengthAdjust="spacingAndGlyphs">Traffic by Page</text><circle cx="583.8" cy="1221.6" r="7.2" fill="#6b93ff"/><circle cx="608" cy="1221.6" r="10.8" fill="#fdfdfd"/><path transform="translate(596.7 1210.23) scale(0.94)" d="M24 12.073c0-6.627-5.373-12-12-12s-12 5.373-12 12c0 5.99 4.388 10.954 10.125 11.854v-8.385H7.078v-3.47h3.047V9.43c0-3.007 1.792-4.669 4.533-4.669 1.312 0 2.686.235 2.686.235v2.953H15.83c-1.491 0-1.956.925-1.956 1.874v2.25h3.328l-.532 3.47h-2.796v8.385C19.612 23.027 24 18.062 24 12.073z" fill="#1877f2"/><text x="625.22" y="1228.41" font-size="18.71" font-weight="400" fill="#3a3839" textLength="38.46" lengthAdjust="spacingAndGlyphs">Fans</text><rect x="670.4" y="1215.9" width="10.5" height="11.4" fill="#e8690f"/><circle cx="697.7" cy="1221.6" r="11.4" fill="#dd2a73"/><rect x="691.44" y="1215.18" width="12.52" height="12.85" rx="3.37" fill="none" stroke="#fdfdfd" stroke-width="1.08"/><circle cx="697.7" cy="1221.6" r="3.05" fill="none" stroke="#fdfdfd" stroke-width="1.04"/><circle cx="701.31" cy="1217.99" r="0.8" fill="#fdfdfd"/><text x="714.59" y="1228.41" font-size="18.64" font-weight="400" fill="#3a3839" textLength="80.85" lengthAdjust="spacingAndGlyphs">Followers</text><circle cx="583.8" cy="1256.4" r="7.2" fill="#2c4750"/><circle cx="608" cy="1256.3" r="11.3" fill="#1da1f2"/><path transform="translate(601.87 1250.27) scale(0.53)" d="M23.953 4.57a10 10 0 01-2.825.775 4.958 4.958 0 002.163-2.723c-.951.555-2.005.959-3.127 1.184a4.92 4.92 0 00-8.384 4.482C7.69 8.095 4.067 6.13 1.64 3.162a4.822 4.822 0 00-.666 2.475c0 1.71.87 3.213 2.188 4.096a4.904 4.904 0 01-2.228-.616v.06a4.923 4.923 0 003.946 4.827 4.996 4.996 0 01-2.212.085 4.936 4.936 0 004.604 3.417 9.867 9.867 0 01-6.102 2.105c-.39 0-.779-.023-1.17-.067a13.995 13.995 0 007.557 2.209c9.053 0 13.998-7.496 13.998-13.985 0-.21 0-.42-.015-.63A9.935 9.935 0 0024 4.59z" fill="#fdfdfd"/><text x="624.88" y="1262.79" font-size="21.36" font-weight="400" fill="#3a3839" textLength="92.15" lengthAdjust="spacingAndGlyphs">Followers</text><text x="722.97" y="1263.23" font-size="16.71" font-weight="700" fill="#241f21" textLength="75.39" lengthAdjust="spacingAndGlyphs">+ 5 more</text><path d="M602.14 1468.12 A127.4 127.4 0 0 1 638.15 1355.29 L667.32 1384.87 A85.85 85.85 0 0 0 643.05 1460.91 Z" fill="#f0588a" stroke="#fdfdfd" stroke-width="1.4"/><path d="M638.15 1355.29 A127.4 127.4 0 0 1 701.33 1321.34 L709.9 1362 A85.85 85.85 0 0 0 667.32 1384.87 Z" fill="#a97bff" stroke="#fdfdfd" stroke-width="1.4"/><path d="M701.33 1321.34 A127.4 127.4 0 0 1 755.07 1321.6 L746.11 1362.17 A85.85 85.85 0 0 0 709.9 1362 Z" fill="#7b93c7" stroke="#fdfdfd" stroke-width="1.4"/><path d="M755.07 1321.6 A127.4 127.4 0 0 1 823.75 1362.42 L792.39 1389.68 A85.85 85.85 0 0 0 746.11 1362.17 Z" fill="#6690ff" stroke="#fdfdfd" stroke-width="1.4"/><path d="M823.75 1362.42 A127.4 127.4 0 0 1 855 1446 L813.45 1446 A85.85 85.85 0 0 0 792.39 1389.68 Z" fill="#e8680f" stroke="#fdfdfd" stroke-width="1.4"/><path d="M855 1446 A127.4 127.4 0 0 1 847.32 1489.57 L808.27 1475.36 A85.85 85.85 0 0 0 813.45 1446 Z" fill="#20a58b" stroke="#fdfdfd" stroke-width="1.4"/></svg><svg class="abs " style="left:926px;top:1122px" width="352" height="337" viewBox="926 1122 352 337"><circle cx="962.7" cy="1162.6" r="13.8" fill="#fdfdfd"/><path transform="translate(948.4 1148.22) scale(1.19)" d="M24 12.073c0-6.627-5.373-12-12-12s-12 5.373-12 12c0 5.99 4.388 10.954 10.125 11.854v-8.385H7.078v-3.47h3.047V9.43c0-3.007 1.792-4.669 4.533-4.669 1.312 0 2.686.235 2.686.235v2.953H15.83c-1.491 0-1.956.925-1.956 1.874v2.25h3.328l-.532 3.47h-2.796v8.385C19.612 23.027 24 18.062 24 12.073z" fill="#1877f2"/><text x="989.3" y="1173" font-size="26.6" font-weight="700" fill="#241f21" textLength="67.17" lengthAdjust="spacingAndGlyphs">Posts</text><text x="988.27" y="1213.3" font-size="15.84" font-weight="400" fill="#3a3839" textLength="46.78" lengthAdjust="spacingAndGlyphs">12 Feb</text><text x="1095.57" y="1213.3" font-size="15.84" font-weight="400" fill="#3a3839" textLength="46.88" lengthAdjust="spacingAndGlyphs">13 Feb</text><text x="1202.86" y="1213.3" font-size="15.84" font-weight="400" fill="#3a3839" textLength="47.19" lengthAdjust="spacingAndGlyphs">18 Feb</text><rect x="988.6" y="1219.4" width="261.2" height="1.6" fill="#3c3a3a"/><rect x="993.35" y="1220.2" width="1.5" height="5.8" fill="#3c3a3a"/><rect x="1118.25" y="1220.2" width="1.5" height="5.8" fill="#3c3a3a"/><rect x="1243.15" y="1220.2" width="1.5" height="5.8" fill="#3c3a3a"/><text x="948.02" y="1226.05" font-size="15.84" font-weight="400" fill="#3a3839" textLength="17.36" lengthAdjust="spacingAndGlyphs">70</text><text x="948.02" y="1269.95" font-size="15.84" font-weight="400" fill="#3a3839" textLength="17.36" lengthAdjust="spacingAndGlyphs">60</text><text x="948.18" y="1313.55" font-size="15.84" font-weight="400" fill="#3a3839" textLength="17.2" lengthAdjust="spacingAndGlyphs">50</text><text x="948.5" y="1357.15" font-size="15.84" font-weight="400" fill="#3a3839" textLength="16.87" lengthAdjust="spacingAndGlyphs">40</text><text x="948.26" y="1400.75" font-size="15.84" font-weight="400" fill="#3a3839" textLength="17.11" lengthAdjust="spacingAndGlyphs">30</text><text x="948.02" y="1444.35" font-size="15.84" font-weight="400" fill="#3a3839" textLength="17.36" lengthAdjust="spacingAndGlyphs">20</text><path d="M988.6 1263.8 H1249.8" stroke="#b9b7b7" stroke-width="1.3" stroke-dasharray="6.2 4.15" fill="none"/><path d="M988.6 1305.6 H1249.8" stroke="#b9b7b7" stroke-width="1.3" stroke-dasharray="6.2 4.15" fill="none"/><path d="M988.6 1348 H1249.8" stroke="#b9b7b7" stroke-width="1.3" stroke-dasharray="6.2 4.15" fill="none"/><path d="M988.6 1389.8 H1249.8" stroke="#b9b7b7" stroke-width="1.3" stroke-dasharray="6.2 4.15" fill="none"/><path d="M988.6 1431.5 H1249.8" stroke="#b9b7b7" stroke-width="1.3" stroke-dasharray="6.2 4.15" fill="none"/><rect x="989.7" y="1248.4" width="5.6" height="211.6" fill="#6b93ff"/><rect x="998.1" y="1285.8" width="5.6" height="174.2" fill="#0057d4"/><rect x="1033.3" y="1285.8" width="5.6" height="174.2" fill="#6b93ff"/><rect x="1040.3" y="1285.8" width="5.8" height="174.2" fill="#0057d4"/><rect x="1073.9" y="1260.1" width="5.9" height="199.9" fill="#6b93ff"/><rect x="1080.9" y="1260.1" width="5.9" height="199.9" fill="#0057d4"/><rect x="1116.4" y="1260.1" width="5.6" height="199.9" fill="#6b93ff"/><rect x="1123" y="1260.1" width="5.9" height="199.9" fill="#0057d4"/><rect x="1158.5" y="1285.8" width="5.6" height="174.2" fill="#6b93ff"/><rect x="1165.5" y="1248.4" width="5.9" height="211.6" fill="#0057d4"/><rect x="1201" y="1271.1" width="5.6" height="188.9" fill="#6b93ff"/><rect x="1208" y="1284" width="5.6" height="176" fill="#0057d4"/><rect x="1241.7" y="1260.1" width="5.5" height="199.9" fill="#6b93ff"/><rect x="1248.6" y="1260.1" width="5.9" height="199.9" fill="#0057d4"/></svg><svg class="abs " style="left:1300px;top:1122px" width="352" height="337" viewBox="1300 1122 352 337"><circle cx="1337" cy="1163.2" r="14.2" fill="#dd2a73"/><rect x="1329.2" y="1155.2" width="15.6" height="16" rx="4.2" fill="none" stroke="#fdfdfd" stroke-width="1.35"/><circle cx="1337" cy="1163.2" r="3.8" fill="none" stroke="#fdfdfd" stroke-width="1.3"/><circle cx="1341.5" cy="1158.7" r="1" fill="#fdfdfd"/><text x="1361.97" y="1174" font-size="25.87" font-weight="700" fill="#241f21" textLength="187.55" lengthAdjust="spacingAndGlyphs">Audience &gt; Age</text><circle cx="1329.9" cy="1205.9" r="7.1" fill="#6b93ff"/><text x="1342.15" y="1212.82" font-size="18.17" font-weight="400" fill="#3a3839" textLength="45.93" lengthAdjust="spacingAndGlyphs">18-24</text><circle cx="1407.9" cy="1205.9" r="7.1" fill="#e8690f"/><text x="1420.8" y="1212.82" font-size="18.17" font-weight="400" fill="#3a3839" textLength="45.87" lengthAdjust="spacingAndGlyphs">25-30</text><circle cx="1486.1" cy="1205.9" r="7.1" fill="#27a08a"/><text x="1498.88" y="1212.82" font-size="18.17" font-weight="400" fill="#3a3839" textLength="45.99" lengthAdjust="spacingAndGlyphs">30-35</text><circle cx="1564.3" cy="1205.9" r="7.1" fill="#9b27c4"/><text x="1577.08" y="1212.82" font-size="18.17" font-weight="400" fill="#3a3839" textLength="46" lengthAdjust="spacingAndGlyphs">35-40</text><text x="1314.39" y="1264.2" font-size="15.55" font-weight="400" fill="#3a3839" textLength="33.94" lengthAdjust="spacingAndGlyphs">5000</text><text x="1314.7" y="1317.1" font-size="15.55" font-weight="400" fill="#3a3839" textLength="33.63" lengthAdjust="spacingAndGlyphs">4000</text><text x="1314.47" y="1369.7" font-size="15.55" font-weight="400" fill="#3a3839" textLength="33.86" lengthAdjust="spacingAndGlyphs">3000</text><text x="1314.23" y="1422.2" font-size="15.55" font-weight="400" fill="#3a3839" textLength="34.1" lengthAdjust="spacingAndGlyphs">2000</text><path d="M1361.8 1261.2 H1629.2" stroke="#b9b7b7" stroke-width="1.3" stroke-dasharray="6.2 4.15" fill="none"/><path d="M1361.8 1294 H1625" stroke="#b9b7b7" stroke-width="1.3" stroke-dasharray="6.2 4.15" fill="none"/><path d="M1361.8 1327.6 H1625" stroke="#b9b7b7" stroke-width="1.3" stroke-dasharray="6.2 4.15" fill="none"/><path d="M1361.8 1362 H1625" stroke="#b9b7b7" stroke-width="1.3" stroke-dasharray="6.2 4.15" fill="none"/><path d="M1361.8 1395.7 H1625" stroke="#b9b7b7" stroke-width="1.3" stroke-dasharray="6.2 4.15" fill="none"/><path d="M1361.8 1429.4 H1625" stroke="#b9b7b7" stroke-width="1.3" stroke-dasharray="6.2 4.15" fill="none"/><path d="M1366.1 1424.2 C1370.03 1409.91 1373.87 1395.13 1378 1380.9 C1381.85 1367.64 1385.35 1353.73 1390.3 1340.9 C1392.98 1333.96 1396.91 1327.08 1401.1 1321 C1403.08 1318.13 1405.91 1315.04 1409 1313.8 C1412.48 1312.4 1417.06 1312.8 1421 1313 C1425.57 1313.23 1430.28 1315.19 1434.8 1315.1 C1438.4 1315.03 1442.23 1313.81 1445.6 1312.5 C1447.91 1311.6 1450.25 1310.15 1452 1308.4 C1455.82 1304.58 1459.26 1299.99 1462.5 1295.6 C1467.77 1288.44 1472.67 1280.67 1477.8 1273.4 C1481.78 1267.77 1485.85 1261.92 1490.1 1256.5 C1491.69 1254.46 1493.32 1252.03 1495.5 1250.8 C1498.24 1249.26 1501.87 1247.98 1505 1248.1 C1509.03 1248.25 1513.24 1250.24 1517.2 1251.6 C1521.33 1253.02 1525.34 1255.84 1529.5 1256.5 C1532.43 1256.96 1535.82 1254.45 1538.7 1255 C1542.42 1255.71 1546.32 1257.99 1549.5 1260.3 C1553.95 1263.53 1557.68 1268.07 1561.8 1271.8 C1565.27 1274.94 1568.69 1278.55 1572.5 1281.1 C1574.01 1282.11 1576.26 1282.85 1577.9 1282.6 C1579.33 1282.39 1580.32 1280.25 1581.8 1279.7 C1585.14 1278.46 1588.92 1277.71 1592.5 1277.2 C1597.5 1276.49 1602.74 1276.28 1607.8 1276 C1613.47 1275.69 1619.32 1275.6 1625 1275.4 L1625 1470 L1366.1 1470 Z" fill="#c47fd6"/><path d="M1366.1 1424.2 C1370.03 1409.91 1373.87 1395.13 1378 1380.9 C1381.85 1367.64 1385.35 1353.73 1390.3 1340.9 C1392.98 1333.96 1396.91 1327.08 1401.1 1321 C1403.08 1318.13 1405.91 1315.04 1409 1313.8 C1412.48 1312.4 1417.06 1312.8 1421 1313 C1425.57 1313.23 1430.28 1315.19 1434.8 1315.1 C1438.4 1315.03 1442.23 1313.81 1445.6 1312.5 C1447.91 1311.6 1450.25 1310.15 1452 1308.4 C1455.82 1304.58 1459.26 1299.99 1462.5 1295.6 C1467.77 1288.44 1472.67 1280.67 1477.8 1273.4 C1481.78 1267.77 1485.85 1261.92 1490.1 1256.5 C1491.69 1254.46 1493.32 1252.03 1495.5 1250.8 C1498.24 1249.26 1501.87 1247.98 1505 1248.1 C1509.03 1248.25 1513.24 1250.24 1517.2 1251.6 C1521.33 1253.02 1525.34 1255.84 1529.5 1256.5 C1532.43 1256.96 1535.82 1254.45 1538.7 1255 C1542.42 1255.71 1546.32 1257.99 1549.5 1260.3 C1553.95 1263.53 1557.68 1268.07 1561.8 1271.8 C1565.27 1274.94 1568.69 1278.55 1572.5 1281.1 C1574.01 1282.11 1576.26 1282.85 1577.9 1282.6 C1579.33 1282.39 1580.32 1280.25 1581.8 1279.7 C1585.14 1278.46 1588.92 1277.71 1592.5 1277.2 C1597.5 1276.49 1602.74 1276.28 1607.8 1276 C1613.47 1275.69 1619.32 1275.6 1625 1275.4" fill="none" stroke="#9b27c4" stroke-width="3" stroke-linejoin="round"/><circle cx="1366.1" cy="1424.2" r="3.7" fill="#9b27c4"/><circle cx="1409" cy="1313.8" r="3.7" fill="#9b27c4"/><circle cx="1452" cy="1308.4" r="3.7" fill="#9b27c4"/><circle cx="1495.5" cy="1250.8" r="3.7" fill="#9b27c4"/><circle cx="1538.7" cy="1255" r="3.7" fill="#9b27c4"/><circle cx="1581.8" cy="1279.7" r="3.7" fill="#9b27c4"/><circle cx="1625" cy="1275.4" r="3.7" fill="#9b27c4"/><path d="M1366.1 1448.4 C1370.03 1436.26 1373.65 1423.59 1378 1411.6 C1382.66 1398.77 1387.61 1385.5 1393.4 1373.2 C1395.72 1368.27 1399.11 1363.52 1402.6 1359.4 C1404.26 1357.44 1406.64 1355.76 1409 1354.8 C1412.22 1353.49 1416.05 1352.39 1419.5 1352.5 C1423.57 1352.62 1427.73 1354.56 1431.8 1355.5 C1435.32 1356.31 1439.03 1357.97 1442.5 1357.8 C1445.69 1357.64 1449.77 1356.72 1452 1354.5 C1456.37 1350.16 1459.69 1343.72 1462.5 1337.9 C1468.21 1326.06 1472.42 1313.03 1477.8 1301 C1481.04 1293.76 1484.6 1286.32 1488.6 1279.5 C1490.44 1276.35 1492.66 1272.28 1495.5 1270.8 C1497.54 1269.74 1500.89 1271.09 1503.4 1271.8 C1507.55 1272.97 1511.69 1274.84 1515.7 1276.5 C1520.3 1278.4 1524.88 1281.98 1529.5 1282.6 C1532.47 1283 1535.62 1279.87 1538.7 1279.6 C1541.2 1279.38 1544.32 1279.73 1546.4 1281.1 C1550.43 1283.76 1553.78 1288.14 1557.2 1291.8 C1560.87 1295.73 1563.93 1300.57 1567.9 1304.1 C1570.5 1306.41 1574.08 1308.96 1577.1 1309.5 C1578.66 1309.78 1580.12 1307.28 1581.8 1306.6 C1585.2 1305.23 1588.88 1303.97 1592.5 1303.3 C1597.46 1302.38 1602.74 1301.91 1607.8 1301.8 C1613.47 1301.68 1619.32 1302.34 1625 1302.6 L1625 1470 L1366.1 1470 Z" fill="#76bdb3"/><path d="M1366.1 1448.4 C1370.03 1436.26 1373.65 1423.59 1378 1411.6 C1382.66 1398.77 1387.61 1385.5 1393.4 1373.2 C1395.72 1368.27 1399.11 1363.52 1402.6 1359.4 C1404.26 1357.44 1406.64 1355.76 1409 1354.8 C1412.22 1353.49 1416.05 1352.39 1419.5 1352.5 C1423.57 1352.62 1427.73 1354.56 1431.8 1355.5 C1435.32 1356.31 1439.03 1357.97 1442.5 1357.8 C1445.69 1357.64 1449.77 1356.72 1452 1354.5 C1456.37 1350.16 1459.69 1343.72 1462.5 1337.9 C1468.21 1326.06 1472.42 1313.03 1477.8 1301 C1481.04 1293.76 1484.6 1286.32 1488.6 1279.5 C1490.44 1276.35 1492.66 1272.28 1495.5 1270.8 C1497.54 1269.74 1500.89 1271.09 1503.4 1271.8 C1507.55 1272.97 1511.69 1274.84 1515.7 1276.5 C1520.3 1278.4 1524.88 1281.98 1529.5 1282.6 C1532.47 1283 1535.62 1279.87 1538.7 1279.6 C1541.2 1279.38 1544.32 1279.73 1546.4 1281.1 C1550.43 1283.76 1553.78 1288.14 1557.2 1291.8 C1560.87 1295.73 1563.93 1300.57 1567.9 1304.1 C1570.5 1306.41 1574.08 1308.96 1577.1 1309.5 C1578.66 1309.78 1580.12 1307.28 1581.8 1306.6 C1585.2 1305.23 1588.88 1303.97 1592.5 1303.3 C1597.46 1302.38 1602.74 1301.91 1607.8 1301.8 C1613.47 1301.68 1619.32 1302.34 1625 1302.6" fill="none" stroke="#27a08a" stroke-width="3" stroke-linejoin="round"/><circle cx="1366.1" cy="1448.4" r="3.7" fill="#27a08a"/><circle cx="1409" cy="1354.8" r="3.7" fill="#27a08a"/><circle cx="1452" cy="1354.5" r="3.7" fill="#27a08a"/><circle cx="1495.5" cy="1270.8" r="3.7" fill="#27a08a"/><circle cx="1538.7" cy="1279.6" r="3.7" fill="#27a08a"/><circle cx="1581.8" cy="1306.6" r="3.7" fill="#27a08a"/><circle cx="1625" cy="1302.6" r="3.7" fill="#27a08a"/><path d="M1366.5 1482 C1369.04 1473.95 1371.61 1465.64 1374.2 1457.6 C1377.95 1445.94 1381.61 1433.84 1385.7 1422.3 C1388.97 1413.09 1392.66 1403.68 1396.5 1394.7 C1398.73 1389.49 1401.16 1384.07 1404.1 1379.3 C1405.29 1377.37 1407.12 1375.66 1409 1374.4 C1412.69 1371.93 1416.84 1368.45 1421 1368 C1425.36 1367.53 1430.21 1370.56 1434.8 1371.6 C1437.8 1372.28 1441.01 1373.37 1444 1373.2 C1446.69 1373.04 1450.04 1372.39 1452 1370.6 C1456.14 1366.82 1458.98 1360.98 1462.5 1356.3 C1467.49 1349.66 1472.72 1342.88 1477.8 1336.3 C1481.33 1331.72 1484.79 1326.83 1488.6 1322.5 C1490.63 1320.19 1492.99 1317.96 1495.5 1316.2 C1498.41 1314.16 1501.79 1312.56 1505 1311 C1509.48 1308.83 1514.19 1306.79 1518.8 1304.9 C1522.81 1303.26 1527.02 1301.76 1531.1 1300.3 C1533.59 1299.41 1536.19 1297.8 1538.7 1297.8 C1541.24 1297.8 1544.72 1298.45 1546.4 1300.3 C1549.8 1304.06 1551.8 1309.9 1554.1 1314.8 C1557.38 1321.78 1559.86 1329.41 1563.3 1336.3 C1565.94 1341.59 1568.95 1347.09 1572.5 1351.7 C1574.03 1353.69 1576.57 1355.57 1578.7 1356.3 C1579.64 1356.62 1580.76 1355.31 1581.8 1354.9 C1585.31 1353.53 1588.85 1351.74 1592.5 1350.9 C1597.43 1349.76 1602.76 1349.6 1607.8 1348.9 C1613.48 1348.11 1619.32 1347.23 1625 1346.4 L1625 1470 L1366.5 1470 Z" fill="#e8ab82"/><path d="M1366.5 1482 C1369.04 1473.95 1371.61 1465.64 1374.2 1457.6 C1377.95 1445.94 1381.61 1433.84 1385.7 1422.3 C1388.97 1413.09 1392.66 1403.68 1396.5 1394.7 C1398.73 1389.49 1401.16 1384.07 1404.1 1379.3 C1405.29 1377.37 1407.12 1375.66 1409 1374.4 C1412.69 1371.93 1416.84 1368.45 1421 1368 C1425.36 1367.53 1430.21 1370.56 1434.8 1371.6 C1437.8 1372.28 1441.01 1373.37 1444 1373.2 C1446.69 1373.04 1450.04 1372.39 1452 1370.6 C1456.14 1366.82 1458.98 1360.98 1462.5 1356.3 C1467.49 1349.66 1472.72 1342.88 1477.8 1336.3 C1481.33 1331.72 1484.79 1326.83 1488.6 1322.5 C1490.63 1320.19 1492.99 1317.96 1495.5 1316.2 C1498.41 1314.16 1501.79 1312.56 1505 1311 C1509.48 1308.83 1514.19 1306.79 1518.8 1304.9 C1522.81 1303.26 1527.02 1301.76 1531.1 1300.3 C1533.59 1299.41 1536.19 1297.8 1538.7 1297.8 C1541.24 1297.8 1544.72 1298.45 1546.4 1300.3 C1549.8 1304.06 1551.8 1309.9 1554.1 1314.8 C1557.38 1321.78 1559.86 1329.41 1563.3 1336.3 C1565.94 1341.59 1568.95 1347.09 1572.5 1351.7 C1574.03 1353.69 1576.57 1355.57 1578.7 1356.3 C1579.64 1356.62 1580.76 1355.31 1581.8 1354.9 C1585.31 1353.53 1588.85 1351.74 1592.5 1350.9 C1597.43 1349.76 1602.76 1349.6 1607.8 1348.9 C1613.48 1348.11 1619.32 1347.23 1625 1346.4" fill="none" stroke="#e8690f" stroke-width="3" stroke-linejoin="round"/><circle cx="1366.5" cy="1482" r="3.7" fill="#e8690f"/><circle cx="1409" cy="1374.4" r="3.7" fill="#e8690f"/><circle cx="1452" cy="1370.6" r="3.7" fill="#e8690f"/><circle cx="1495.5" cy="1316.2" r="3.7" fill="#e8690f"/><circle cx="1538.7" cy="1297.8" r="3.7" fill="#e8690f"/><circle cx="1581.8" cy="1354.9" r="3.7" fill="#e8690f"/><circle cx="1625" cy="1346.4" r="3.7" fill="#e8690f"/><path d="M1408 1476 C1412.82 1469.93 1417.64 1463.56 1422.6 1457.6 C1426.49 1452.93 1430.66 1448.25 1434.8 1443.8 C1437.72 1440.66 1440.65 1437.21 1444 1434.6 C1446.33 1432.79 1449.24 1431.5 1452 1430.4 C1455.35 1429.06 1458.96 1427.49 1462.5 1427.2 C1466.49 1426.87 1470.74 1428.5 1474.8 1428.5 C1478.33 1428.5 1482.16 1428.25 1485.5 1427.2 C1488.99 1426.1 1492.89 1424.5 1495.5 1422 C1499.32 1418.33 1502.19 1413.16 1505 1408.5 C1508.86 1402.1 1512.35 1395.19 1515.7 1388.5 C1519.45 1381 1522.99 1373.11 1526.5 1365.5 C1529.06 1359.95 1531.38 1354.06 1534.1 1348.6 C1535.4 1345.98 1536.91 1343.29 1538.7 1341 C1540.08 1339.23 1542.2 1335.75 1543.7 1336.3 C1546.26 1337.24 1549.25 1342.09 1551 1345.5 C1554.2 1351.72 1556.16 1358.9 1558.7 1365.5 C1561.24 1372.1 1563.51 1379.07 1566.4 1385.5 C1568.06 1389.2 1570.09 1393.02 1572.5 1396.2 C1573.62 1397.68 1575.57 1399.58 1577.1 1399.6 C1578.64 1399.62 1580.11 1397.12 1581.8 1396.3 C1584.17 1395.14 1586.91 1393.4 1589.4 1393.6 C1592.98 1393.89 1597.04 1395.75 1600.2 1397.8 C1604.63 1400.67 1608.67 1404.68 1612.4 1408.5 C1616.85 1413.06 1620.84 1418.35 1625 1423.2 L1625 1470 L1408 1470 Z" fill="#a3b7f7"/><path d="M1408 1476 C1412.82 1469.93 1417.64 1463.56 1422.6 1457.6 C1426.49 1452.93 1430.66 1448.25 1434.8 1443.8 C1437.72 1440.66 1440.65 1437.21 1444 1434.6 C1446.33 1432.79 1449.24 1431.5 1452 1430.4 C1455.35 1429.06 1458.96 1427.49 1462.5 1427.2 C1466.49 1426.87 1470.74 1428.5 1474.8 1428.5 C1478.33 1428.5 1482.16 1428.25 1485.5 1427.2 C1488.99 1426.1 1492.89 1424.5 1495.5 1422 C1499.32 1418.33 1502.19 1413.16 1505 1408.5 C1508.86 1402.1 1512.35 1395.19 1515.7 1388.5 C1519.45 1381 1522.99 1373.11 1526.5 1365.5 C1529.06 1359.95 1531.38 1354.06 1534.1 1348.6 C1535.4 1345.98 1536.91 1343.29 1538.7 1341 C1540.08 1339.23 1542.2 1335.75 1543.7 1336.3 C1546.26 1337.24 1549.25 1342.09 1551 1345.5 C1554.2 1351.72 1556.16 1358.9 1558.7 1365.5 C1561.24 1372.1 1563.51 1379.07 1566.4 1385.5 C1568.06 1389.2 1570.09 1393.02 1572.5 1396.2 C1573.62 1397.68 1575.57 1399.58 1577.1 1399.6 C1578.64 1399.62 1580.11 1397.12 1581.8 1396.3 C1584.17 1395.14 1586.91 1393.4 1589.4 1393.6 C1592.98 1393.89 1597.04 1395.75 1600.2 1397.8 C1604.63 1400.67 1608.67 1404.68 1612.4 1408.5 C1616.85 1413.06 1620.84 1418.35 1625 1423.2" fill="none" stroke="#6b93ff" stroke-width="3" stroke-linejoin="round"/><circle cx="1452" cy="1430.4" r="3.7" fill="#6b93ff"/><circle cx="1495.5" cy="1422" r="3.7" fill="#6b93ff"/><circle cx="1538.7" cy="1341" r="3.7" fill="#6b93ff"/><circle cx="1581.8" cy="1396.3" r="3.7" fill="#6b93ff"/><circle cx="1625" cy="1423.2" r="3.7" fill="#6b93ff"/></svg><svg class="abs " style="left:1673px;top:1122px" width="352" height="337" viewBox="1673 1122 352 337"><circle cx="1705.4" cy="1156.8" r="13.8" fill="#fdfdfd"/><path transform="translate(1691.1 1142.42) scale(1.19)" d="M24 12.073c0-6.627-5.373-12-12-12s-12 5.373-12 12c0 5.99 4.388 10.954 10.125 11.854v-8.385H7.078v-3.47h3.047V9.43c0-3.007 1.792-4.669 4.533-4.669 1.312 0 2.686.235 2.686.235v2.953H15.83c-1.491 0-1.956.925-1.956 1.874v2.25h3.328l-.532 3.47h-2.796v8.385C19.612 23.027 24 18.062 24 12.073z" fill="#1877f2"/><text x="1730.48" y="1167.5" font-size="25.58" font-weight="700" fill="#241f21" textLength="160.92" lengthAdjust="spacingAndGlyphs">Fans by Page</text><rect x="1673.8" y="1217.85" width="351" height="1.7" fill="#ebeaea"/><rect x="1673.8" y="1317.35" width="351" height="1.7" fill="#ebeaea"/><rect x="1673.8" y="1416.95" width="351" height="1.7" fill="#ebeaea"/><text x="1690.99" y="1285.7" font-size="21.08" font-weight="700" fill="#241f21" textLength="148.38" lengthAdjust="spacingAndGlyphs">Somos London</text><circle cx="1870.3" cy="1277.2" r="11.4" fill="#b1dcba"/><path d="M1865.6 1282.1 L1873.9 1273.8" fill="none" stroke="#0f9226" stroke-width="3"/><path d="M1868 1271.8 H1875.7 V1279.2 H1872.9 V1274.6 H1868 Z" fill="#0f9226"/><text x="1887.46" y="1285.59" font-size="20.85" font-weight="700" fill="#241f21" textLength="23.52" lengthAdjust="spacingAndGlyphs">61</text><rect x="1923" y="1259.4" width="85.2" height="35.1" fill="#6a93ff"/><text x="1934.34" y="1287.34" font-size="25.92" font-weight="700" fill="#fdfdfd" textLength="62.14" lengthAdjust="spacingAndGlyphs">126K</text><text x="1690.99" y="1379.4" font-size="21.08" font-weight="700" fill="#241f21" textLength="176.92" lengthAdjust="spacingAndGlyphs">Somos Vancouver</text><circle cx="1884" cy="1371" r="11.4" fill="#b1dcba"/><path d="M1879.3 1375.9 L1887.6 1367.6" fill="none" stroke="#0f9226" stroke-width="3"/><path d="M1881.7 1365.6 H1889.4 V1373 H1886.6 V1368.4 H1881.7 Z" fill="#0f9226"/><text x="1901.26" y="1379.29" font-size="20.85" font-weight="700" fill="#241f21" textLength="23.52" lengthAdjust="spacingAndGlyphs">61</text><rect x="1937" y="1353.2" width="71.2" height="35.1" fill="#6a93ff"/><text x="1948.09" y="1381.14" font-size="25.92" font-weight="700" fill="#fdfdfd" textLength="47.69" lengthAdjust="spacingAndGlyphs">62K</text><rect x="1937" y="1446.8" width="71.1" height="35.1" fill="#6b93ff"/><circle cx="1884" cy="1464.7" r="11.2" fill="#f5a9a9"/></svg>
<div class="abs " style="left:0px;top:0px;width:112.4px;height:1.3px;background:#000"></div>
<div class="abs " style="left:114px;top:1px;width:427px;height:1px;background:#ebe8e6"></div>
<div class="abs " style="left:112.4px;top:0px;width:429px;height:1.3px;background:#cdcdcd"></div>
<div class="abs " style="left:541px;top:0px;width:1507px;height:1.3px;background:#000"></div>
<div class="abs " style="left:0px;top:1457.7px;width:112.4px;height:1.3px;background:#000"></div>
<div class="abs " style="left:114px;top:1457px;width:429px;height:1px;background:#ebe8e6"></div>
<div class="abs " style="left:112.4px;top:1457.7px;width:430.6px;height:1.3px;background:#cdcdcd"></div>
<div class="abs " style="left:543px;top:1457.7px;width:1505px;height:1.3px;background:#000"></div>
</body></html>
